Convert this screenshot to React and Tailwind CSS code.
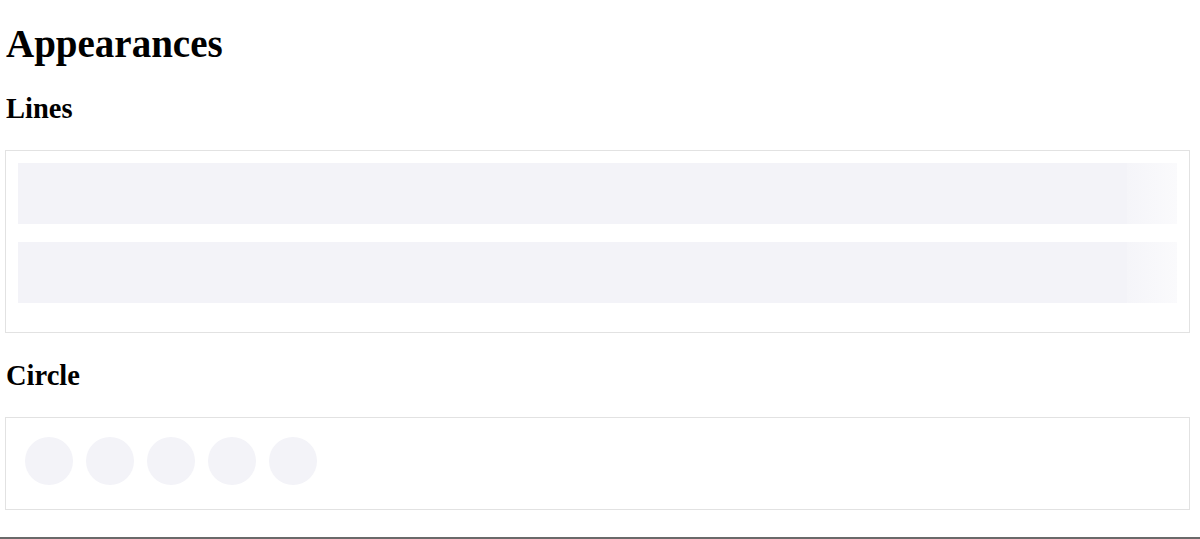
export default function App() {
  return (
    <div className="w-[1200px] h-[539px] bg-white overflow-hidden flex flex-col" style={{ fontFamily: '"Liberation Serif", serif' }}>
      <div className="flex-1 px-[5px]">
        <h1 className="text-[39px] font-bold leading-none text-black mt-[24px] ml-[1px]">Appearances</h1>
        <h2 className="text-[28.5px] font-bold leading-none text-black mt-[32px] ml-[1px]">Lines</h2>
        <div className="mt-[26px] w-[1185px] h-[183px] border border-[#e2e2e2] px-[12px] pt-[12px] flex flex-col gap-[18px]">
          <div className="h-[61px] flex">
            <div className="flex-1 bg-[#f3f3f8]" />
            <div className="w-[50px] bg-gradient-to-r from-[#f5f5f9] to-[#fafafc]" />
          </div>
          <div className="h-[61px] flex">
            <div className="flex-1 bg-[#f3f3f8]" />
            <div className="w-[50px] bg-gradient-to-r from-[#f5f5f9] to-[#fafafc]" />
          </div>
        </div>
        <h2 className="text-[28.5px] font-bold leading-none text-black mt-[29px] ml-[1px]">Circle</h2>
        <div className="mt-[27px] w-[1185px] h-[93px] border border-[#e2e2e2] pl-[19px] pt-[19px] flex gap-[13px] items-start">
          {[0, 1, 2, 3, 4].map((i) => (
            <div key={i} className="w-[48px] h-[48px] rounded-full bg-[#f3f3f8]" />
          ))}
        </div>
      </div>
      <div className="h-[2px] bg-[#6a6a6a]" />
    </div>
  );
}
